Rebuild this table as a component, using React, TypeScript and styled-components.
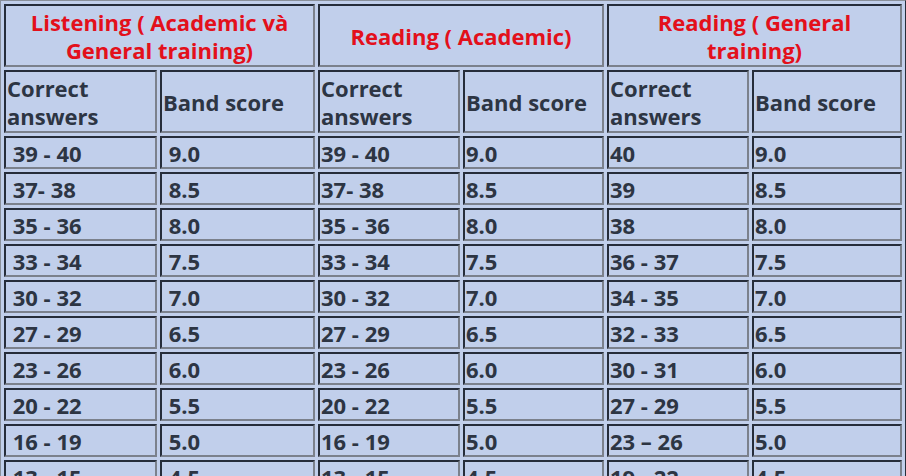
import styled, { createGlobalStyle } from "styled-components";

const GlobalStyle = createGlobalStyle`
  body {
    margin: 0;
    background: #ffffff;
    font-family: "Open Sans", "Liberation Sans", sans-serif;
  }
`;

type Section = {
  title: string;
  rows: [string, string][];
};

const sections: Section[] = [
  {
    title: "Listening ( Academic và General training)",
    rows: [
      ["\u00a039 - 40", "\u00a09.0"],
      ["\u00a037- 38", "\u00a08.5"],
      ["\u00a035 - 36", "\u00a08.0"],
      ["\u00a033 - 34", "\u00a07.5"],
      ["\u00a030 - 32", "\u00a07.0"],
      ["\u00a027 - 29", "\u00a06.5"],
      ["\u00a023 - 26", "\u00a06.0"],
      ["\u00a020 - 22", "\u00a05.5"],
      ["\u00a016 - 19", "\u00a05.0"],
      ["\u00a013 - 15", "\u00a04.5"],
    ],
  },
  {
    title: "Reading ( Academic)",
    rows: [
      ["39 - 40", "9.0"],
      ["37- 38", "8.5"],
      ["35 - 36", "8.0"],
      ["33 - 34", "7.5"],
      ["30 - 32", "7.0"],
      ["27 - 29", "6.5"],
      ["23 - 26", "6.0"],
      ["20 - 22", "5.5"],
      ["16 - 19", "5.0"],
      ["13 - 15", "4.5"],
    ],
  },
  {
    title: "Reading ( General training)",
    rows: [
      ["40", "9.0"],
      ["39", "8.5"],
      ["38", "8.0"],
      ["36 - 37", "7.5"],
      ["34 - 35", "7.0"],
      ["32 - 33", "6.5"],
      ["30 - 31", "6.0"],
      ["27 - 29", "5.5"],
      ["23 \u2013 26", "5.0"],
      ["19 - 22", "4.5"],
    ],
  },
];

const colWidths = [153, 155, 142, 141, 142, 150];

export default function App() {
  const rowCount = sections[0].rows.length;

  return (
    <>
      <GlobalStyle />
      <Table>
        <colgroup>
          {colWidths.map((w, i) => (
            <col key={i} style={{ width: w }} />
          ))}
        </colgroup>
        <tbody>
          <tr>
            {sections.map((s) => (
              <TitleCell key={s.title} colSpan={2}>
                {s.title}
              </TitleCell>
            ))}
          </tr>
          <tr>
            {sections.map((s) => [
              <HeadCell key={s.title + "a"}>Correct answers</HeadCell>,
              <HeadCell key={s.title + "b"}>Band score</HeadCell>,
            ])}
          </tr>
          {Array.from({ length: rowCount }).map((_, r) => (
            <tr key={r}>
              {sections.map((s) => [
                <Cell key={s.title + r + "a"}>{s.rows[r][0]}</Cell>,
                <Cell key={s.title + r + "b"}>{s.rows[r][1]}</Cell>,
              ])}
            </tr>
          ))}
        </tbody>
      </Table>
    </>
  );
}

const Table = styled.table`
  width: 906px;
  table-layout: fixed;
  border-collapse: separate;
  border-spacing: 3px;
  background: #c1cfeb;
  border-style: solid;
  border-width: 1px;
  border-color: #8a909a #262d3a #262d3a #8a909a;
`;

const BaseCell = styled.td`
  box-sizing: border-box;
  border-style: solid;
  border-width: 2px;
  border-color: #262d3a #7b818c #7b818c #262d3a;
  background: #c1cfeb;
  padding: 0 1px;
  font-weight: 700;
  font-size: 22px;
  color: #2d3543;
  text-align: left;
  vertical-align: middle;
`;

const TitleCell = styled(BaseCell)`
  height: 63px;
  color: #e3101b;
  text-align: center;
  line-height: 28px;
`;

const HeadCell = styled(BaseCell)`
  height: 63px;
  line-height: 28px;
`;

const Cell = styled(BaseCell)`
  height: 33px;
  line-height: 26px;
  white-space: nowrap;
`;
